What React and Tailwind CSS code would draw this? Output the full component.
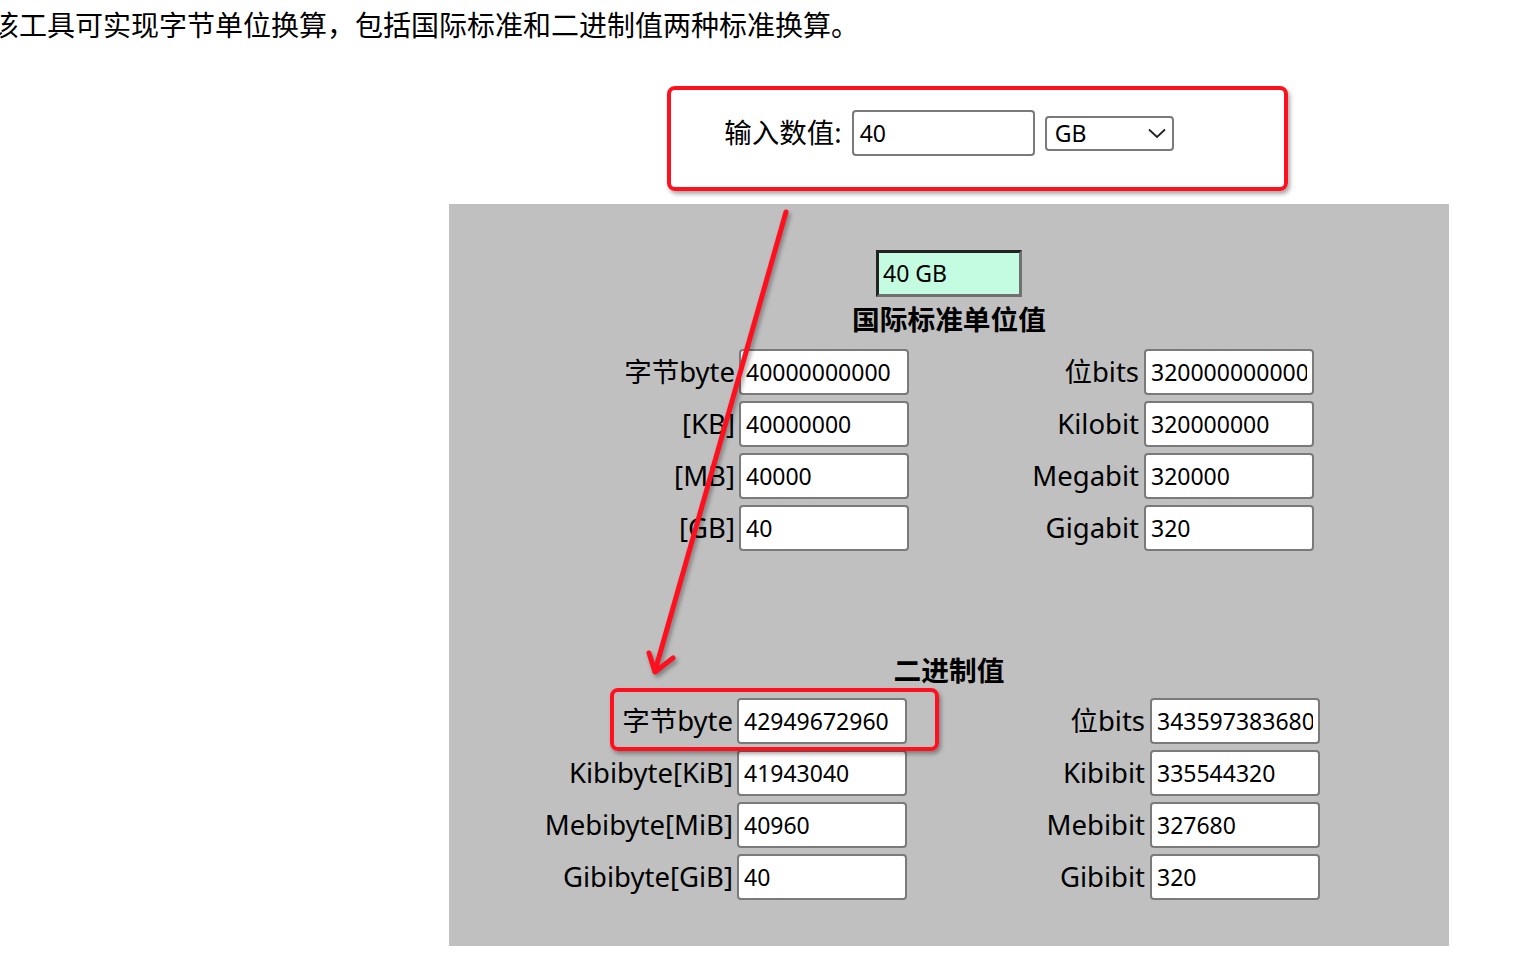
import React from "react";

const siRows = [
  ["字节byte", "40000000000", "位bits", "320000000000"],
  ["[KB]", "40000000", "Kilobit", "320000000"],
  ["[MB]", "40000", "Megabit", "320000"],
  ["[GB]", "40", "Gigabit", "320"],
];

const binRows = [
  ["字节byte", "42949672960", "位bits", "343597383680"],
  ["Kibibyte[KiB]", "41943040", "Kibibit", "335544320"],
  ["Mebibyte[MiB]", "40960", "Mebibit", "327680"],
  ["Gibibyte[GiB]", "40", "Gibibit", "320"],
];

const font = { fontFamily: '"Noto Sans", "Noto Sans CJK SC", sans-serif' };
const cjk = { fontFamily: '"Noto Sans CJK SC", sans-serif' };

const ValueBox = ({ value }) => (
  <input
    readOnly
    value={value}
    className="w-[170px] h-[46px] shrink-0 bg-white border-2 border-[#7a7a7a] rounded-[4px] px-[5px] text-[23px] text-black outline-none"
    style={font}
  />
);

const Row = ({ row, leftW, rightW }) => (
  <div className="flex items-center h-[46px]">
    <div className={`${leftW} text-right text-[27.5px] leading-none whitespace-nowrap`}>{row[0]}</div>
    <div className="ml-[4px]">
      <ValueBox value={row[1]} />
    </div>
    <div className={`${rightW} text-right text-[27.5px] leading-none whitespace-nowrap`}>{row[2]}</div>
    <div className="ml-[5px]">
      <ValueBox value={row[3]} />
    </div>
  </div>
);

export default function App() {
  return (
    <div className="relative w-full h-[966px] bg-white text-black overflow-hidden" style={font}>
      {/* intro line, clipped at the left edge like the original */}
      <p className="-ml-[9px] text-[28px] leading-[48px] whitespace-nowrap" style={cjk}>
        该工具可实现字节单位换算，包括国际标准和二进制值两种标准换算。
      </p>

      {/* input row */}
      <div className="ml-[449px] w-[1000px] mt-[62px] flex items-center justify-center h-[46px]">
        <span className="text-[27.5px] leading-none">输入数值:</span>
        <input
          readOnly
          value="40"
          className="ml-[10px] w-[183px] h-[46px] bg-white border-2 border-[#7a7a7a] rounded-[4px] px-[6px] text-[23px] outline-none"
          style={font}
        />
        <div className="relative ml-[10px] w-[129px] h-[35px] border-2 border-[#7a7a7a] rounded-[4px] bg-white flex items-center pl-[8px] text-[23px]">
          GB
          <svg
            className="absolute right-[6px] top-[10px]"
            width="18"
            height="11"
            viewBox="0 0 18 11"
            fill="none"
            stroke="#222"
            strokeWidth="1.8"
          >
            <path d="M1 1.5 L9 9 L17 1.5" />
          </svg>
        </div>
      </div>

      {/* results panel */}
      <div className="ml-[449px] w-[1000px] mt-[48px] bg-[#c0c0c0] pt-[46px] pb-[46px] flex flex-col">
        <div className="self-center w-[146px] h-[47px] bg-[#c3fce0] border-[3px] border-t-[#222] border-l-[#222] border-b-[#707070] border-r-[#707070] pl-[4px] flex items-center text-[23px]">
          40 GB
        </div>
        <h2 className="mt-[1px] text-center font-bold text-[27.7px] leading-[40px]" style={cjk}>
          国际标准单位值
        </h2>
        <div className="mt-[11px] flex flex-col gap-[6px]">
          {siRows.map((r, i) => (
            <Row key={i} row={r} leftW="w-[286px]" rightW="w-[230px]" />
          ))}
        </div>
        <h2 className="mt-[98px] text-center font-bold text-[27.7px] leading-[40px]" style={cjk}>
          二进制值
        </h2>
        <div className="mt-[9px] flex flex-col gap-[6px]">
          {binRows.map((r, i) => (
            <Row key={i} row={r} leftW="w-[284px]" rightW="w-[238px]" />
          ))}
        </div>
      </div>

      {/* annotation overlays */}
      <div className="absolute left-[667px] top-[86px] w-[621px] h-[105px] border-4 border-[#fe101f] rounded-[8px] shadow-[2px_3px_4px_rgba(0,0,0,0.35)] pointer-events-none" />
      <div className="absolute left-[610px] top-[688px] w-[329px] h-[63px] border-4 border-[#fe101f] rounded-[8px] shadow-[2px_3px_4px_rgba(0,0,0,0.35)] pointer-events-none" />
      <svg
        className="absolute left-0 top-0 pointer-events-none drop-shadow-[2px_3px_2px_rgba(0,0,0,0.35)]"
        width="1526"
        height="966"
        fill="none"
        stroke="#fe101f"
        strokeWidth="5"
        strokeLinecap="round"
        strokeLinejoin="round"
      >
        <path d="M786 212 L655 671" />
        <path d="M649 653 L655 672 L673 658" />
      </svg>
    </div>
  );
}
